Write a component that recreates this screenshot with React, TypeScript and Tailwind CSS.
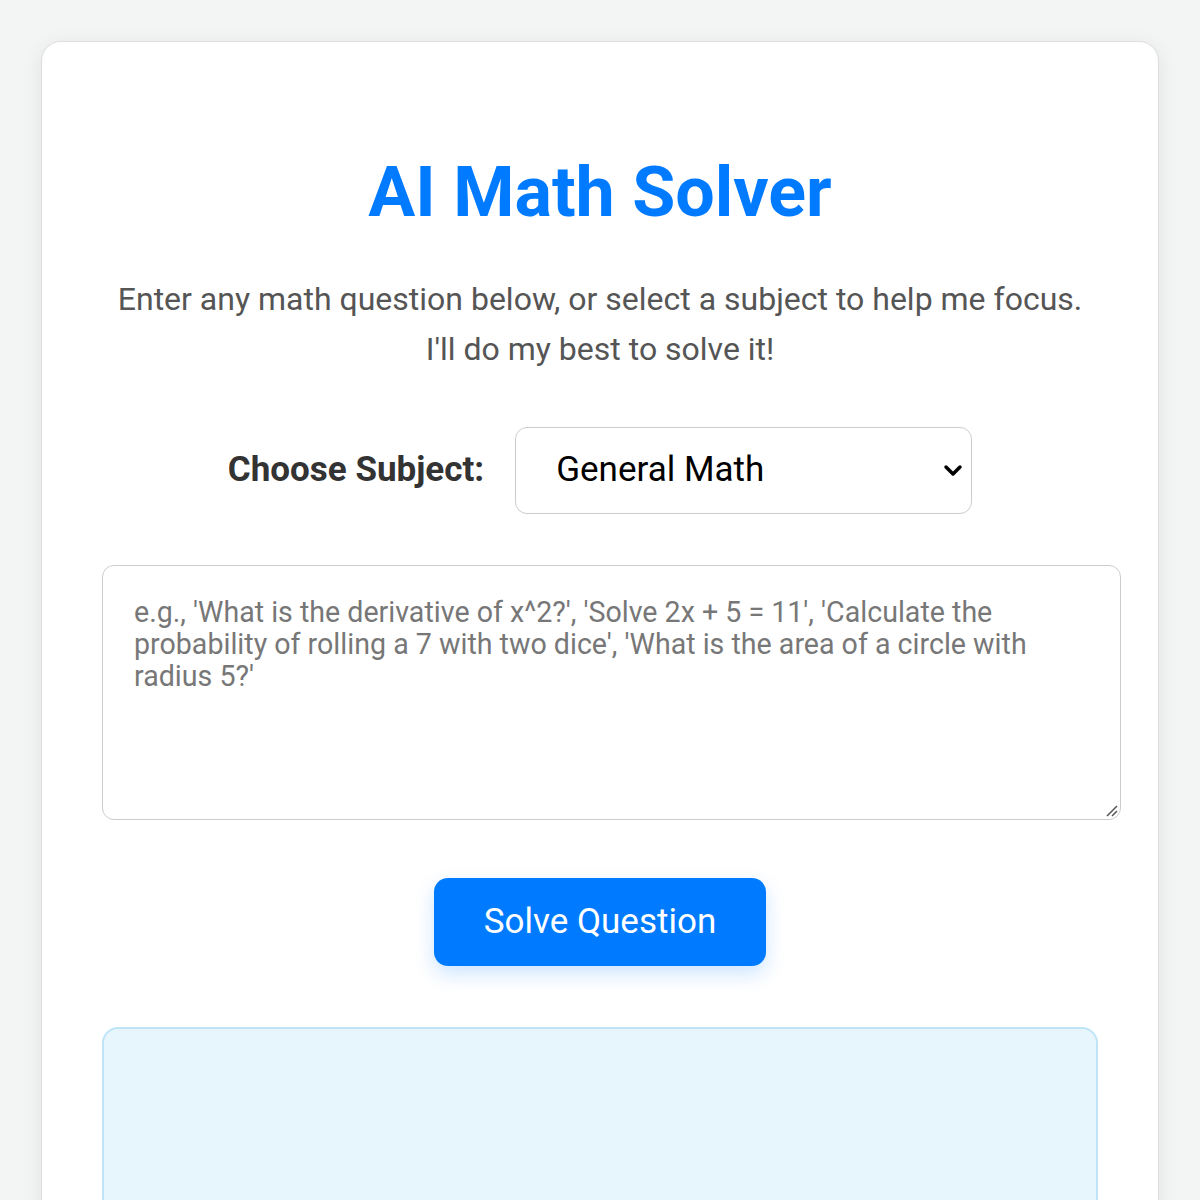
export default function App() {
  return (
    <div className="min-h-[1200px] bg-[#f3f4f4] pt-[41px] px-[41px]" style={{ fontFamily: "Roboto, 'Liberation Sans', sans-serif" }}>
      <div className="bg-white border border-[#dedede] rounded-[20px] shadow-[0_4px_20px_rgba(0,0,0,0.08)] px-[60px] pt-[115px] pb-[60px] min-h-[1200px]">
        <h1 className="text-center text-[#007bff] font-bold text-[70px] leading-[1]">AI Math Solver</h1>
        <p className="text-center text-[#555] text-[32px] leading-[50px] mt-[47px]">
          Enter any math question below, or select a subject to help me focus.<br />I'll do my best to solve it!
        </p>
        <div className="flex items-center justify-center gap-[31px] mt-[53px]">
          <label className="text-[#333] font-bold text-[35px]">Choose Subject:</label>
          <div className="relative w-[457px] h-[87px] border border-[#cccccc] rounded-[12px] bg-white flex items-center pl-[40px]">
            <span className="text-[35px] text-black">General Math</span>
            <svg className="absolute right-[8px] top-1/2 -translate-y-1/2" width="20" height="14" viewBox="0 0 20 14">
              <path d="M3 3l7 7 7-7" fill="none" stroke="#000" strokeWidth="3.5" strokeLinecap="round" strokeLinejoin="round" />
            </svg>
          </div>
        </div>
        <div className="relative mt-[51px] w-[1019px] h-[255px] border border-[#cccccc] rounded-[12px] pl-[31px] pr-[30px] pt-[30px]">
          <div className="text-[#777] text-[28.6px] leading-[32px]">
            e.g., 'What is the derivative of x^2?', 'Solve 2x + 5 = 11', 'Calculate the probability of rolling a 7 with two dice', 'What is the area of a circle with radius 5?'
          </div>
          <svg className="absolute right-[1px] bottom-[1px]" width="16" height="16" viewBox="0 0 16 16">
            <path d="M14 4L4 14M14 9L9 14" stroke="#555" strokeWidth="1.5" />
          </svg>
        </div>
        <div className="flex justify-center mt-[58px]">
          <button className="w-[332px] h-[88px] bg-[#007bff] text-white text-[35px] rounded-[14px] shadow-[0_8px_20px_rgba(0,123,255,0.2)]">Solve Question</button>
        </div>
        <div className="mt-[61px] h-[300px] bg-[#e7f6fd] border-2 border-[#bfe4f7] rounded-[16px]"></div>
      </div>
    </div>
  );
}
